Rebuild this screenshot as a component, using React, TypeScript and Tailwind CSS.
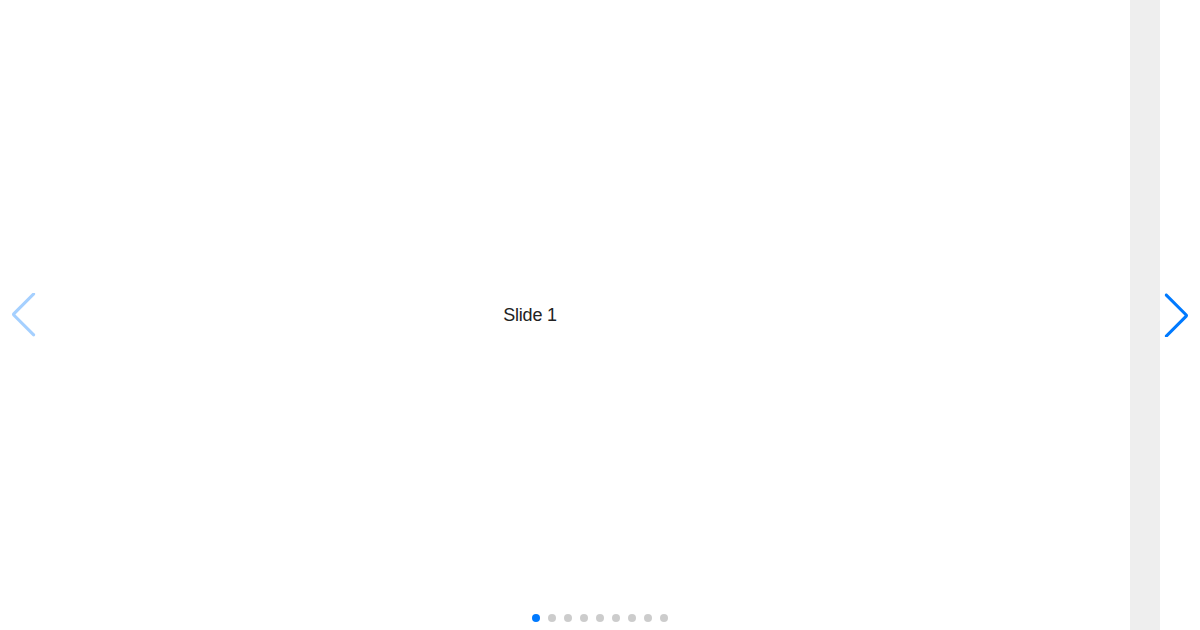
import React from "react";

const Chevron = ({ flip }: { flip?: boolean }) => (
  <svg
    viewBox="0 0 11 20"
    fill="none"
    className={"w-full h-full" + (flip ? " rotate-180" : "")}
    preserveAspectRatio="xMidYMid meet"
  >
    <path
      d="M0.38296 20.0762C0.111788 19.805 0.111788 19.3654 0.38296 19.0942L9.19758 10.2796L0.38296 1.46497C0.111788 1.19379 0.111788 0.754138 0.38296 0.482966C0.654131 0.211794 1.09379 0.211794 1.36496 0.482966L10.4341 9.55214C10.8359 9.9539 10.8359 10.6053 10.4341 11.007L1.36496 20.0762C1.09379 20.3474 0.654131 20.3474 0.38296 20.0762Z"
      fill="currentColor"
    />
  </svg>
);

export default function App() {
  const slides = Array.from({ length: 9 }, (_, i) => i + 1);
  return (
    <div
      className="relative w-[1200px] h-[630px] overflow-hidden bg-[#eeeeee] text-[#222222] text-[18px]"
      style={{ fontFamily: '"Liberation Sans", Helvetica, Arial, sans-serif' }}
    >
      <div className="flex h-full gap-[30px] -translate-x-[70px]">
        {slides.slice(0, 2).map((n) => (
          <div
            key={n}
            className="w-[1200px] h-full shrink-0 bg-white flex items-center justify-center"
          >
            <span className="tracking-[-0.2px]">Slide {n}</span>
          </div>
        ))}
      </div>
      <button className="absolute left-[10px] top-[293px] w-[27px] h-[44px] text-[#007aff] opacity-[0.35] flex items-center justify-center">
        <Chevron flip />
      </button>
      <button className="absolute right-[10px] top-[293px] w-[27px] h-[44px] text-[#007aff] flex items-center justify-center">
        <Chevron />
      </button>
      <div className="absolute bottom-[8px] left-0 right-0 flex justify-center">
        {slides.map((n) => (
          <span
            key={n}
            className={
              "mx-[4px] w-[8px] h-[8px] rounded-full " +
              (n === 1 ? "bg-[#007aff]" : "bg-black/20")
            }
          />
        ))}
      </div>
    </div>
  );
}
